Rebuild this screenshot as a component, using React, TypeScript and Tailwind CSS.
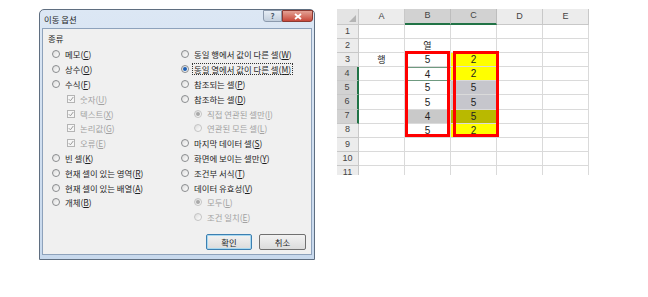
import React from "react";

type Item = {
  label: string;
  key: string;
  kind: "radio" | "check";
  checked?: boolean;
  disabled?: boolean;
  indent?: boolean;
  focus?: boolean;
};

const leftItems: Item[] = [
  { label: "메모", key: "C", kind: "radio" },
  { label: "상수", key: "O", kind: "radio" },
  { label: "수식", key: "F", kind: "radio" },
  { label: "숫자", key: "U", kind: "check", checked: true, disabled: true, indent: true },
  { label: "텍스트", key: "X", kind: "check", checked: true, disabled: true, indent: true },
  { label: "논리값", key: "G", kind: "check", checked: true, disabled: true, indent: true },
  { label: "오류", key: "E", kind: "check", checked: true, disabled: true, indent: true },
  { label: "빈 셀", key: "K", kind: "radio" },
  { label: "현재 셀이 있는 영역", key: "R", kind: "radio" },
  { label: "현재 셀이 있는 배열", key: "A", kind: "radio" },
  { label: "개체", key: "B", kind: "radio" },
];

const rightItems: Item[] = [
  { label: "동일 행에서 값이 다른 셀", key: "W", kind: "radio" },
  { label: "동일 열에서 값이 다른 셀", key: "M", kind: "radio", checked: true, focus: true },
  { label: "참조되는 셀", key: "P", kind: "radio" },
  { label: "참조하는 셀", key: "D", kind: "radio" },
  { label: "직접 연관된 셀만", key: "I", kind: "radio", checked: true, disabled: true, indent: true },
  { label: "연관된 모든 셀", key: "L", kind: "radio", disabled: true, indent: true },
  { label: "마지막 데이터 셀", key: "S", kind: "radio" },
  { label: "화면에 보이는 셀만", key: "Y", kind: "radio" },
  { label: "조건부 서식", key: "T", kind: "radio" },
  { label: "데이터 유효성", key: "V", kind: "radio" },
  { label: "모두", key: "L", kind: "radio", checked: true, disabled: true, indent: true },
  { label: "조건 일치", key: "E", kind: "radio", disabled: true, indent: true },
];

function Radio({ checked, disabled }: { checked?: boolean; disabled?: boolean }) {
  return (
    <span
      className={`w-[8px] h-[8px] rounded-full border shrink-0 flex items-center justify-center bg-gradient-to-br from-[#dcdcdc] to-white ${
        disabled ? "border-[#c4c4c4]" : "border-[#8a8c8e]"
      }`}
    >
      {checked && <span className={`w-[4px] h-[4px] rounded-full ${disabled ? "bg-[#a8a8a8]" : "bg-[#1d5fb4]"}`} />}
    </span>
  );
}

function Check({ checked, disabled }: { checked?: boolean; disabled?: boolean }) {
  return (
    <span className={`w-[8px] h-[8px] border shrink-0 flex items-center justify-center bg-[#f6f6f6] ${disabled ? "border-[#b4b4b4]" : "border-[#8a8c8e]"}`}>
      {checked && (
        <svg width="6" height="6" viewBox="0 0 6 6">
          <path d="M0.8 3.2 L2.4 4.8 L5.3 1" fill="none" stroke={disabled ? "#9a9a9a" : "#333"} strokeWidth="1" />
        </svg>
      )}
    </span>
  );
}

function Option({ item, indentPx }: { item: Item; indentPx: string }) {
  return (
    <div className={`h-[14.8px] flex items-center gap-[4px] ${item.indent ? indentPx : ""}`}>
      {item.kind === "radio" ? <Radio checked={item.checked} disabled={item.disabled} /> : <Check checked={item.checked} disabled={item.disabled} />}
      <span
        className={`whitespace-nowrap leading-[10px] px-[1px] ${item.disabled ? "text-[#a2a2a2]" : "text-[#1e1e1e]"} ${
          item.focus ? "outline outline-1 outline-dotted outline-[#333]" : ""
        }`}
      >
        {item.label}(<span className="underline">{item.key}</span>)
      </span>
    </div>
  );
}

function Dialog() {
  return (
    <div className="ml-[39px] mt-[9px] w-[276px] h-[251px] flex flex-col border border-[#5f6e80] rounded-t-[5px] bg-gradient-to-b from-[#dce7f4] to-[#c8d9ed] text-[8.4px] font-['Noto_Sans_CJK_KR',sans-serif] shrink-0">
      <div className="h-[18px] flex items-start justify-between">
        <span className="pl-[4px] pt-[4px] leading-[10px] text-[#1e1e1e]">이동 옵션</span>
        <div className="flex mr-[1px]">
          <div className="w-[19px] h-[12px] border border-[#8c9aad] rounded-bl-[3px] bg-gradient-to-b from-[#e6edf5] to-[#c3cfdd] flex items-center justify-center text-[8px] leading-none text-[#4d5a6b] font-bold">
            ?
          </div>
          <div className="w-[31px] h-[12px] border border-[#8c3a32] rounded-br-[3px] bg-gradient-to-b from-[#e3a195] to-[#c7473a] flex items-center justify-center">
            <svg width="8" height="7" viewBox="0 0 8 7">
              <path d="M1 1 L7 6 M7 1 L1 6" stroke="white" strokeWidth="1.8" />
            </svg>
          </div>
        </div>
      </div>
      <div className="mx-[2px] mb-[4px] flex-1 border border-[#8ea2bb] bg-[#f0f0f0] flex flex-col">
        <div className="pl-[5px] pt-[4px] leading-[10px] text-[#1e1e1e]">종류</div>
        <div className="flex pt-[4px]">
          <div className="w-[138px] pl-[9px] flex flex-col">
            {leftItems.map((it, i) => (
              <Option key={i} item={it} indentPx="pl-[15px]" />
            ))}
          </div>
          <div className="flex flex-col">
            {rightItems.map((it, i) => (
              <Option key={i} item={it} indentPx="pl-[13px]" />
            ))}
          </div>
        </div>
        <div className="mt-auto flex justify-end gap-[7px] pr-[5px] pb-[4px]">
          <div className="w-[46px] h-[16px] rounded-[2px] border border-[#3c7fb1] bg-gradient-to-b from-[#f2f2f2] to-[#dcdcdc] shadow-[inset_0_0_0_1px_#a8d8f0] flex items-center justify-center text-[#1e1e1e]">
            확인
          </div>
          <div className="w-[47px] h-[16px] rounded-[2px] border border-[#707070] bg-gradient-to-b from-[#f2f2f2] to-[#dcdcdc] flex items-center justify-center text-[#1e1e1e]">
            취소
          </div>
        </div>
      </div>
    </div>
  );
}

const cols = ["A", "B", "C", "D", "E"];
const rows = [1, 2, 3, 4, 5, 6, 7, 8, 9, 10, 11];

const cellData: Record<string, { v?: string; bg?: string; ko?: boolean }> = {
  B2: { v: "열", ko: true },
  A3: { v: "행", ko: true },
  B3: { v: "5" },
  B4: { v: "4" },
  B5: { v: "5" },
  B6: { v: "5" },
  B7: { v: "4", bg: "bg-[#c9c9c9]" },
  B8: { v: "5" },
  C3: { v: "2", bg: "bg-[#ffff00]" },
  C4: { v: "2", bg: "bg-[#ffff00]" },
  C5: { v: "5", bg: "bg-[#c6c6cc]" },
  C6: { v: "5", bg: "bg-[#c6c6cc]" },
  C7: { v: "5", bg: "bg-[#b9b900]" },
  C8: { v: "2", bg: "bg-[#ffff00]" },
};

function Sheet() {
  return (
    <div className="ml-[22px] mt-[9px] h-[166px] overflow-hidden relative font-['Liberation_Sans',sans-serif] shrink-0">
      <div className="flex h-[16px]">
        <div className="w-[22px] h-full bg-[#e4e4e4] border-r border-b border-[#c8c8c8] relative">
          <svg className="absolute right-[2px] bottom-[2px]" width="7" height="7" viewBox="0 0 7 7">
            <path d="M7 0 L7 7 L0 7 Z" fill="#b4b4b4" />
          </svg>
        </div>
        {cols.map((c) => {
          const sel = c === "B" || c === "C";
          return (
            <div
              key={c}
              className={`w-[46px] h-full flex items-center justify-center text-[9px] text-[#444] border-r ${
                sel ? "bg-[#d2d2d2] border-b-2 border-b-[#217346] border-r-[#bdbdbd]" : "bg-[#ececec] border-b border-[#c8c8c8]"
              }`}
            >
              {c}
            </div>
          );
        })}
      </div>
      {rows.map((r) => {
        const sel = r >= 4 && r <= 7;
        return (
          <div key={r} className="flex h-[14.1px]">
            <div
              className={`w-[22px] h-full flex items-center justify-center text-[9px] text-[#444] border-b border-[#c8c8c8] ${
                sel ? "bg-[#d2d2d2] border-r-2 border-r-[#217346]" : "bg-[#ececec] border-r"
              }`}
            >
              {r}
            </div>
            {cols.map((c) => {
              const d = cellData[c + r];
              return (
                <div
                  key={c}
                  className={`w-[46px] h-full flex items-center justify-center border-r border-b border-[#dadada] text-[10px] text-[#222] ${d?.bg ?? "bg-white"} ${
                    c + r === "B4" ? "border-t border-t-[#6f9a80] border-b-[#6f9a80]" : ""
                  }`}
                >
                  {d?.v && <span className={d.ko ? "font-['Noto_Sans_CJK_KR',sans-serif] text-[9px]" : ""}>{d.v}</span>}
                </div>
              );
            })}
          </div>
        );
      })}
      <div className="absolute left-[68px] top-[42px] w-[45px] h-[86px] border-[3px] border-[#ff0000]" />
      <div className="absolute left-[116px] top-[42px] w-[46px] h-[86px] border-[3px] border-[#ff0000]" />
    </div>
  );
}

export default function App() {
  return (
    <div className="w-[648px] h-[297px] bg-white flex items-start overflow-hidden">
      <Dialog />
      <Sheet />
    </div>
  );
}
